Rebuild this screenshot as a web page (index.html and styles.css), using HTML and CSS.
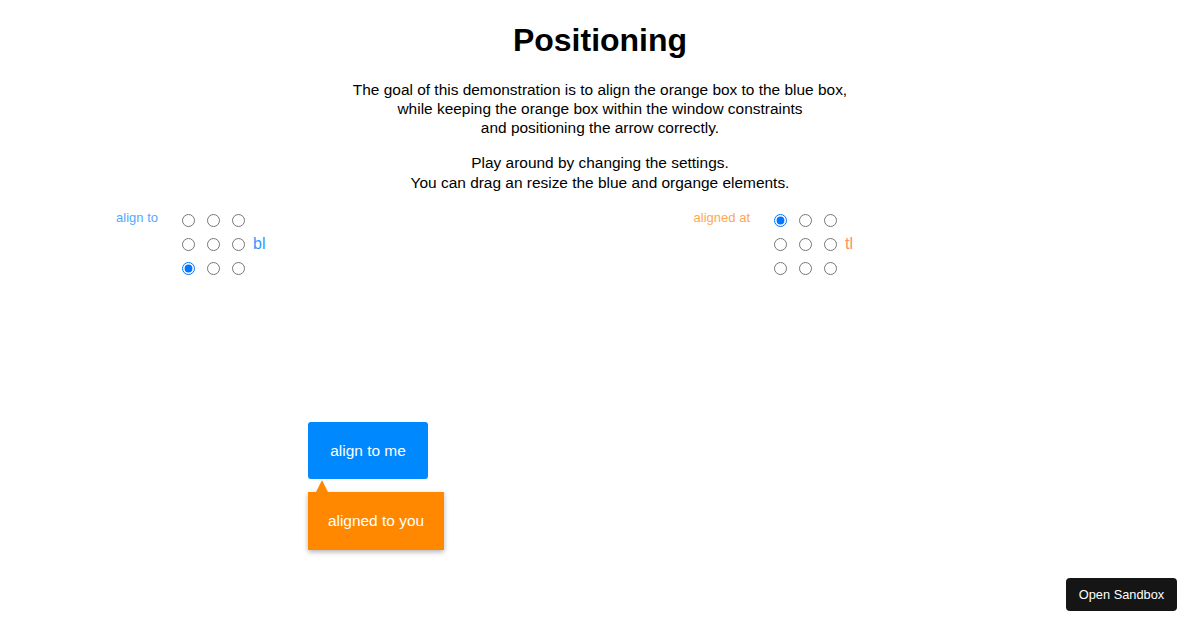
FILE: index.html
```html
<!DOCTYPE html>
<html>
<head>
<meta charset="utf-8">
<link rel="stylesheet" href="styles.css">
</head>
<body>
<h1 class="title">Positioning</h1>
<p class="intro">The goal of this demonstration is to align the orange box to the blue box,<br>while keeping the orange box within the window constraints<br>and positioning the arrow correctly.</p>
<p class="intro">Play around by changing the settings.<br>You can drag an resize the blue and organge elements.</p>

<div class="controls">
  <div class="group">
    <div class="label label-blue">align to</div>
    <div class="grid">
      <input type="radio" name="a"><input type="radio" name="a"><input type="radio" name="a"><span></span>
      <input type="radio" name="a"><input type="radio" name="a"><input type="radio" name="a"><span class="tag tag-blue">bl</span>
      <input type="radio" name="a" checked><input type="radio" name="a"><input type="radio" name="a"><span></span>
    </div>
  </div>
  <div class="group">
    <div class="label label-orange">aligned at</div>
    <div class="grid">
      <input type="radio" name="b" checked><input type="radio" name="b"><input type="radio" name="b"><span></span>
      <input type="radio" name="b"><input type="radio" name="b"><input type="radio" name="b"><span class="tag tag-orange">tl</span>
      <input type="radio" name="b"><input type="radio" name="b"><input type="radio" name="b"><span></span>
    </div>
  </div>
</div>

<div class="box box-blue">align to me</div>
<div class="box box-orange">aligned to you</div>

<a class="sandbox">Open Sandbox</a>
</body>
</html>
```

FILE: styles.css
```css
html, body {
  margin: 0;
  padding: 0;
  background: #ffffff;
}
body {
  font-family: "Liberation Sans", Arial, sans-serif;
  color: #000;
  font-size: 15.45px;
  width: 1200px;
  height: 630px;
  overflow: hidden;
  position: relative;
}
.title {
  font-size: 32px;
  font-weight: bold;
  text-align: center;
  margin: 22px 0 0;
  line-height: 37px;
}
.intro {
  text-align: center;
  margin: 21px 0 0;
  line-height: 19px;
}
.intro + .intro {
  margin-top: 16px;
  line-height: 19.5px;
}
.controls {
  display: flex;
  padding-left: 58px;
  margin-top: 16px;
}
.group {
  flex: none;
  width: 592px;
  display: flex;
  align-items: flex-start;
  gap: 24px;
}
.group + .group {
  width: auto;
}
.label {
  width: 100px;
  text-align: right;
  font-size: 13px;
  line-height: 20px;
}
.label-blue { color: #55a8ff; }
.label-orange { color: #ffa74f; }
.grid {
  display: grid;
  grid-template-columns: 13px 13px 13px auto;
  grid-auto-rows: 24px;
  column-gap: 12px;
  align-items: center;
}
.grid input {
  margin: 0;
  width: 13px;
  height: 13px;
}
.tag {
  margin-left: -4px;
  font-size: 16px;
  line-height: 24px;
}
.tag-blue { color: #3399ff; }
.tag-orange { color: #ff8f5e; }

.box {
  position: absolute;
  color: #fff;
  font-size: 15.45px;
  display: flex;
  align-items: center;
  justify-content: center;
}
.box-blue {
  left: 308px;
  top: 422px;
  width: 120px;
  height: 57px;
  background: #0088ff;
  border-radius: 3px;
}
.box-orange {
  left: 308px;
  top: 492px;
  width: 136px;
  height: 58px;
  background: #ff8800;
  box-shadow: 0 2px 5px rgba(0, 0, 0, 0.3);
}
.box-orange::before {
  content: "";
  position: absolute;
  left: 8px;
  top: -12px;
  border-left: 6px solid transparent;
  border-right: 6px solid transparent;
  border-bottom: 12px solid #ff8800;
}
.sandbox {
  position: absolute;
  right: 23px;
  bottom: 19px;
  width: 111px;
  height: 33px;
  box-sizing: border-box;
  background: #151515;
  color: #fff;
  border-radius: 4px;
  font-size: 12.8px;
  display: flex;
  align-items: center;
  justify-content: center;
}
```
